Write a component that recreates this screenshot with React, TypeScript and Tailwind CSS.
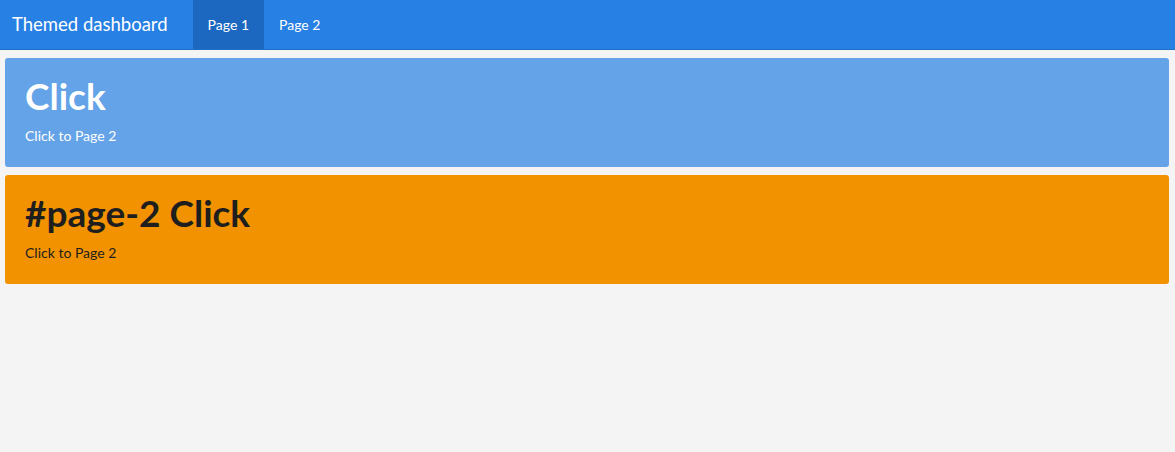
const font = { fontFamily: '"Lato", "Noto Sans", sans-serif' };

function Card({ title, bg, fg }: { title: string; bg: string; fg: string }) {
  return (
    <div className={`rounded-[3px] px-5 pt-4 pb-[21px] ${bg} ${fg}`}>
      <h1 className="text-[37px] font-bold leading-[44px]">{title}</h1>
      <p className="mt-2 text-[14px] leading-[20px]">Click to Page 2</p>
    </div>
  );
}

export default function App() {
  return (
    <div className="min-h-[452px] bg-[#f4f4f4]" style={font}>
      {/* Navbar */}
      <nav className="flex h-[50px] items-stretch border-b border-[#1f6fc5] bg-[#2780e3] text-white">
        <span className="flex items-center pl-3 pr-[25px] text-[18.5px]">Themed dashboard</span>
        <a className="flex items-center bg-[#1c67c0] px-[15px] text-[14px]">Page 1</a>
        <a className="flex items-center px-[15px] text-[14px]">Page 2</a>
      </nav>

      <div className="flex flex-col gap-2 pl-[5px] pr-[6px] pt-2">
        <Card title="Click" bg="bg-[#64a3e7]" fg="text-white" />
        <Card title="#page-2 Click" bg="bg-[#f29200]" fg="text-[#1e1e1e]" />
      </div>
    </div>
  );
}
